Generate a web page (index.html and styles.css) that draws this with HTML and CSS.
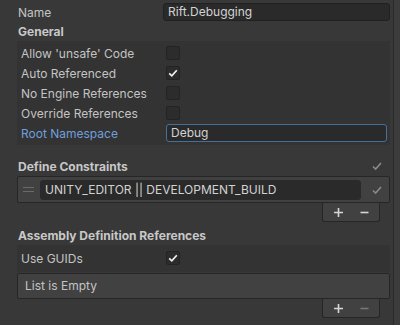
FILE: index.html
```html
<!DOCTYPE html>
<html lang="en">
<head>
    <meta charset="UTF-8">
    <meta name="viewport" content="width=device-width, initial-scale=1.0">
    <title>Assembly Definition</title>
    <link rel="stylesheet" href="styles.css">
</head>
<body>
    <div class="window">
        <!-- Инспектор -->
        <main class="inspector">
            <div class="field-row name-row">
                <span class="label">Name</span>
                <div class="text-field">Rift.Debugging</div>
            </div>

            <div class="header">General</div>
            <div class="group">
                <div class="field-row">
                    <span class="label">Allow 'unsafe' Code</span>
                    <span class="toggle"></span>
                </div>
                <div class="field-row">
                    <span class="label">Auto Referenced</span>
                    <span class="toggle checked">
                        <svg width="12" height="12" viewBox="0 0 12 12"><path d="M2.2 6.3 L4.8 8.8 L9.8 3.2" fill="none" stroke="#f0f0f0" stroke-width="1.7"/></svg>
                    </span>
                </div>
                <div class="field-row">
                    <span class="label">No Engine References</span>
                    <span class="toggle"></span>
                </div>
                <div class="field-row">
                    <span class="label">Override References</span>
                    <span class="toggle"></span>
                </div>
                <div class="field-row">
                    <span class="label focused">Root Namespace</span>
                    <div class="text-field focus">Debug</div>
                </div>
            </div>

            <div class="header">
                <span>Define Constraints</span>
                <svg class="tick" width="12" height="12" viewBox="0 0 12 12"><path d="M2 6.5 L4.6 9 L10 3" fill="none" stroke="#8a8a8a" stroke-width="1.6"/></svg>
            </div>
            <div class="list">
                <div class="list-body">
                    <div class="list-item">
                        <span class="handle"></span>
                        <div class="text-field item-field">UNITY_EDITOR || DEVELOPMENT_BUILD</div>
                        <svg class="tick" width="12" height="12" viewBox="0 0 12 12"><path d="M2 6.5 L4.6 9 L10 3" fill="none" stroke="#8a8a8a" stroke-width="1.6"/></svg>
                    </div>
                </div>
                <div class="list-footer">
                    <svg class="btn" width="11" height="11" viewBox="0 0 11 11"><path d="M5.5 1 V10 M1 5.5 H10" stroke="#d6d6d6" stroke-width="1.6"/></svg>
                    <svg class="btn" width="11" height="11" viewBox="0 0 11 11"><path d="M1.5 5.5 H9.5" stroke="#d6d6d6" stroke-width="1.6"/></svg>
                </div>
            </div>

            <div class="header">Assembly Definition References</div>
            <div class="group compact">
                <div class="field-row">
                    <span class="label">Use GUIDs</span>
                    <span class="toggle checked">
                        <svg width="12" height="12" viewBox="0 0 12 12"><path d="M2.2 6.3 L4.8 8.8 L9.8 3.2" fill="none" stroke="#f0f0f0" stroke-width="1.7"/></svg>
                    </span>
                </div>
            </div>
            <div class="list">
                <div class="list-body empty">List is Empty</div>
                <div class="list-footer">
                    <svg class="btn" width="11" height="11" viewBox="0 0 11 11"><path d="M5.5 1 V10 M1 5.5 H10" stroke="#d6d6d6" stroke-width="1.6"/></svg>
                    <svg class="btn" width="11" height="11" viewBox="0 0 11 11"><path d="M1.5 5.5 H9.5" stroke="#777777" stroke-width="1.6"/></svg>
                </div>
            </div>
        </main>
        <div class="scroll-gutter"></div>
    </div>
</body>
</html>
```

FILE: styles.css
```css
body {
    margin: 0;
    font-family: Inter, "Noto Sans", sans-serif;
    font-size: 12px;
    background-color: #383838;
    color: #c4c4c4;
}

.window {
    display: flex;
    width: 400px;
    height: 325px;
    overflow: hidden;
}

.inspector {
    flex: 1;
    padding: 3px 3px 0 17px;
}

.scroll-gutter {
    width: 6px;
    border-left: 1px solid #2a2a2a;
    background-color: #3c3c3c;
}

/* Строки с полями */
.field-row {
    display: flex;
    align-items: center;
    height: 20px;
}

.field-row .label {
    width: 145px;
    flex-shrink: 0;
    white-space: nowrap;
}

.label.focused {
    color: #6f9fdc;
}

.name-row {
    height: 18px;
}

.name-row .label {
    width: 145px;
    padding-left: 1px;
}

.text-field {
    flex: 1;
    height: 16px;
    line-height: 16px;
    padding: 0 4px;
    background-color: #2a2a2a;
    border: 1px solid #212121;
    border-radius: 3px;
    color: #d2d2d2;
    white-space: nowrap;
}

.text-field.focus {
    border-color: #44709a;
    margin-right: 3px;
}

.toggle {
    display: flex;
    align-items: center;
    justify-content: center;
    width: 12px;
    height: 12px;
    background-color: #2c2c2c;
    border: 1px solid #232323;
    border-radius: 2px;
}

/* Заголовки секций */
.header {
    display: flex;
    justify-content: space-between;
    align-items: center;
    height: 20px;
    padding: 0 7px 0 1px;
    font-weight: bold;
    color: #c8c8c8;
}

.group {
    background-color: #333333;
    padding: 2px 0 2px 4px;
    margin-bottom: 11px;
}

.group.compact {
    padding: 3px 0 4px 4px;
    margin-bottom: 1px;
}

/* Списки */
.list {
    display: flex;
    flex-direction: column;
    align-items: flex-end;
    margin-bottom: 3px;
}

.list-body {
    align-self: stretch;
    background-color: #414141;
    border: 1px solid #262626;
    border-radius: 2px;
}

.list-item {
    display: flex;
    align-items: center;
    height: 25px;
    padding: 0 6px 0 4px;
}

.handle {
    width: 11px;
    height: 3px;
    border-top: 1px solid #6a6a6a;
    border-bottom: 1px solid #6a6a6a;
    margin: 0 6px 0 1px;
}

.item-field {
    margin-right: 10px;
    height: 18px;
    line-height: 18px;
    border-color: #2a2a2a;
}

.list-body.empty {
    height: 24px;
    line-height: 24px;
    padding-left: 7px;
    color: #c4c4c4;
}

.list-footer {
    display: flex;
    justify-content: center;
    align-items: center;
    gap: 15px;
    width: 56px;
    height: 18px;
    margin-right: 10px;
    background-color: #414141;
    border: 1px solid #262626;
    border-top: none;
    border-radius: 0 0 3px 3px;
}

.tick {
    flex-shrink: 0;
}
```
